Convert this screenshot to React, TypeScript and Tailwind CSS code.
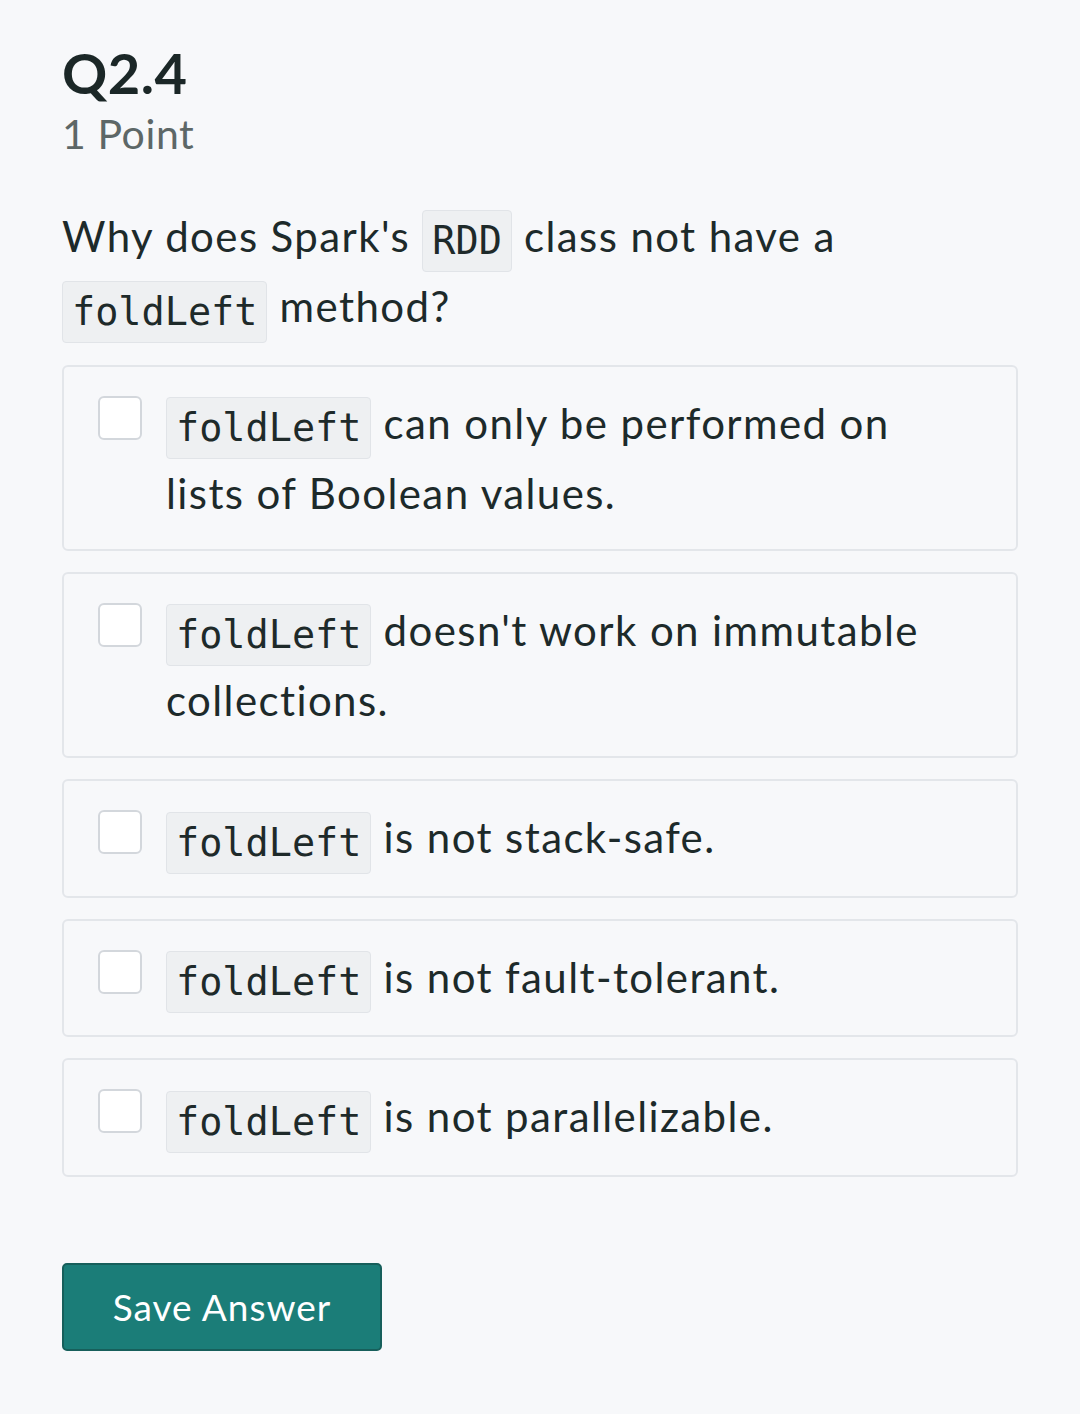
import React from "react";

const sans = { fontFamily: "Lato, 'Open Sans', sans-serif" };

function Code({ children }: { children: React.ReactNode }) {
  return (
    <code className="inline-block rounded-[4px] border border-[#e1e4e8] bg-[#eef0f2] px-[9px] text-[38.5px] leading-[60px] tracking-normal text-[#1e2a2a] font-['DejaVu_Sans_Mono',monospace] align-middle">
      {children}
    </code>
  );
}

const options = [
  "can only be performed on lists of Boolean values.",
  "doesn't work on immutable collections.",
  "is not stack-safe.",
  "is not fault-tolerant.",
  "is not parallelizable.",
];

export default function App() {
  return (
    <div className="min-h-[1414px] bg-[#f7f8fa] px-[62px] pt-[42px] text-[#1d2a2a]" style={sans}>
      <h1 className="text-[56px] font-bold leading-[62px] tracking-[0.5px] text-[#1b2727]">Q2.4</h1>
      <div className="text-[41px] leading-[60px] tracking-[0.6px] text-[#5d6767]">1 Point</div>
      <p className="mt-[38px] text-[42px] leading-[68px] tracking-[1.4px] text-[#1d2a2a]">
        Why does Spark's <Code>RDD</Code> class not have a <Code>foldLeft</Code> method?
      </p>
      <div className="mt-[22px] flex flex-col gap-[21px]">
        {options.map((o, i) => (
          <div key={i} className="flex gap-[24px] rounded-[6px] border-2 border-[#e3e6ea] bg-[#f7f8fa] py-[22px] pl-[34px] pr-[60px]">
            <div className="mt-[7px] h-[44px] w-[44px] shrink-0 rounded-[6px] border-2 border-[#d3d7dc] bg-white" />
            <div className="text-[42px] leading-[68px] tracking-[1.4px]">
              <Code>foldLeft</Code> {o}
            </div>
          </div>
        ))}
      </div>
      <button className="mt-[86px] h-[88px] w-[320px] rounded-[5px] border-2 border-[#175f5b] bg-[#1b7d78] text-[37px] tracking-[1px] text-white" style={sans}>
        Save Answer
      </button>
    </div>
  );
}
